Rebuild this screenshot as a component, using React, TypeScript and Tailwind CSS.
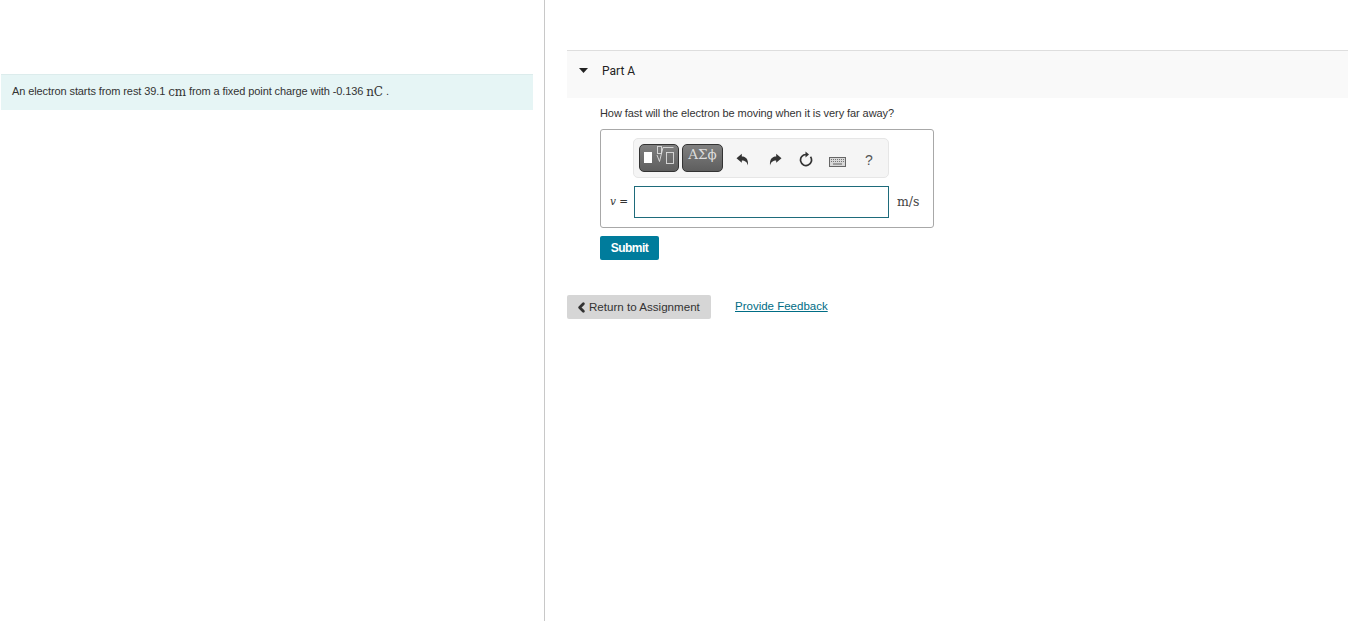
import { ChevronLeft } from "lucide-react"

const mathFont = "font-['DejaVu_Serif','Liberation_Serif',serif]"

function UndoIcon({ flip = false }: { flip?: boolean }) {
  return (
    <svg width="13" height="13" viewBox="0 0 13 13" className={flip ? "-scale-x-100" : ""}>
      <path d="M0.5 5.2 L5.8 0.8 V3.6 C9.8 3.6 12.4 6.2 12 12.5 C10.9 8.8 9.2 7.4 5.8 7.4 V9.8 Z" fill="#333" />
    </svg>
  )
}

function RefreshIcon() {
  return (
    <svg width="14" height="16" viewBox="0 0 14 16" fill="none">
      <path d="M11.5 5.8 A5.5 5.5 0 1 1 7 3.5" stroke="#333" strokeWidth="1.7" />
      <path d="M6.5 0.5 L10 3.5 L6.5 6.5 Z" fill="#333" />
    </svg>
  )
}

function KeyboardIcon() {
  return (
    <svg width="17" height="10" viewBox="0 0 17 10">
      <rect x="0.5" y="0.5" width="16" height="9" fill="#d8d8d8" stroke="#666" />
      <path d="M2 2.5 H15 M2 4.5 H15" stroke="#777" strokeWidth="1" strokeDasharray="1 1" />
      <path d="M4 7 H13" stroke="#777" strokeWidth="1.2" />
    </svg>
  )
}

function TemplateIcon() {
  return (
    <svg width="38" height="26" viewBox="0 0 38 26" fill="none">
      <rect x="4" y="7" width="8" height="11" fill="#fff" />
      <rect x="17.5" y="1.5" width="4" height="7" stroke="#ddd" strokeWidth="0.9" />
      <path d="M17 10 L19.5 16.5 L23 2.5 H33.5" stroke="#ddd" strokeWidth="0.9" />
      <rect x="26.5" y="7.5" width="7" height="11" stroke="#ddd" strokeWidth="0.9" />
    </svg>
  )
}

export default function App() {
  return (
    <div className="flex h-[621px] bg-white font-['Liberation_Sans',Arial,sans-serif] text-[#333] overflow-hidden">
      {/* Left pane */}
      <div className="w-[545px] shrink-0 border-r border-[#c8c8c8] pt-[74px] pl-px pr-[11px]">
        <div className="h-9 bg-[#e6f5f5] border-t border-[#dcecec] pl-[11px] pb-[2px] flex items-center text-[11px] tracking-[-0.1px] text-[#333]">
          <span>An electron starts from rest 39.1&nbsp;</span>
          <span className={`${mathFont} text-[12px] font-medium`}>cm</span>
          <span>&nbsp;from a fixed point charge with -0.136&nbsp;</span>
          <span className={`${mathFont} text-[12px] font-medium`}>nC</span>
          <span>&nbsp;.</span>
        </div>
      </div>

      {/* Right pane */}
      <div className="flex-1 pl-[22px] pt-[50px] min-w-0">
        <div className="h-12 bg-[#f9f9f9] border-t border-[#dedede] flex items-center pl-3 pb-2">
          <svg width="9" height="5" viewBox="0 0 9 5">
            <path d="M0 0 H9 L4.5 5 Z" fill="#222" />
          </svg>
          <span className="ml-[14px] font-['Roboto',sans-serif] text-[12px] font-normal text-[#222]">Part A</span>
        </div>

        <div className="pl-[33px]">
          <p className="mt-[7px] text-[11px] leading-4 tracking-[-0.08px] text-[#333]">How fast will the electron be moving when it is very far away?</p>

          <div className="mt-2 w-[334px] h-[99px] border border-[#a8a8a8] rounded-[3px] pt-2">
            <div className="ml-8 w-[256px] h-10 bg-[#f5f5f5] border border-[#e6e6e6] rounded-[5px] flex items-center pl-[5px]">
              <button className="w-10 h-7 rounded-[5px] border border-[#333] bg-gradient-to-b from-[#808080] to-[#5e5e5e] flex items-center justify-center overflow-hidden">
                <TemplateIcon />
              </button>
              <button className={`ml-[3px] w-[41px] h-7 rounded-[5px] border border-[#333] bg-gradient-to-b from-[#808080] to-[#5e5e5e] text-[#ddd] text-[13.5px] leading-[19px] flex justify-center ${mathFont}`}>
                ΑΣϕ
              </button>
              <div className="ml-[13px] mt-[3px] w-[13px] flex justify-center"><UndoIcon /></div>
              <div className="ml-5 mt-[3px] w-[13px] flex justify-center"><UndoIcon flip /></div>
              <div className="ml-[17px] mt-[2px] w-[14px] flex justify-center"><RefreshIcon /></div>
              <div className="ml-4 mt-[7px]"><KeyboardIcon /></div>
              <span className="ml-[19px] mt-[3px] text-[14px] text-[#555] font-['Liberation_Sans',sans-serif] leading-none">?</span>
            </div>

            <div className="flex items-center mt-2">
              <span className={`w-[33px] pl-[9px] text-[10.5px] font-medium text-[#333] ${mathFont}`}>
                <i>v</i> =
              </span>
              <input className="w-[255px] h-8 border border-[#1e6b7b] bg-white outline-none" />
              <span className={`ml-2 text-[12.5px] text-[#444] ${mathFont}`}>m/s</span>
            </div>
          </div>

          <button className="mt-2 w-[59px] h-6 rounded-[2px] bg-[#007c9c] text-white text-[12px] font-bold tracking-[-0.5px]">Submit</button>
        </div>

        <div className="flex items-center mt-[35px]">
          <button className="w-36 h-6 bg-[#d6d6d6] rounded-[2px] flex items-center pl-[8px] text-[11.6px] text-[#333]">
            <ChevronLeft size={15} strokeWidth={4.5} className="-ml-[1px] text-[#333]" />
            Return to Assignment
          </button>
          <a href="#" className="ml-6 text-[11.5px] text-[#006d85] underline -mt-[1px]">Provide Feedback</a>
        </div>
      </div>
    </div>
  )
}
